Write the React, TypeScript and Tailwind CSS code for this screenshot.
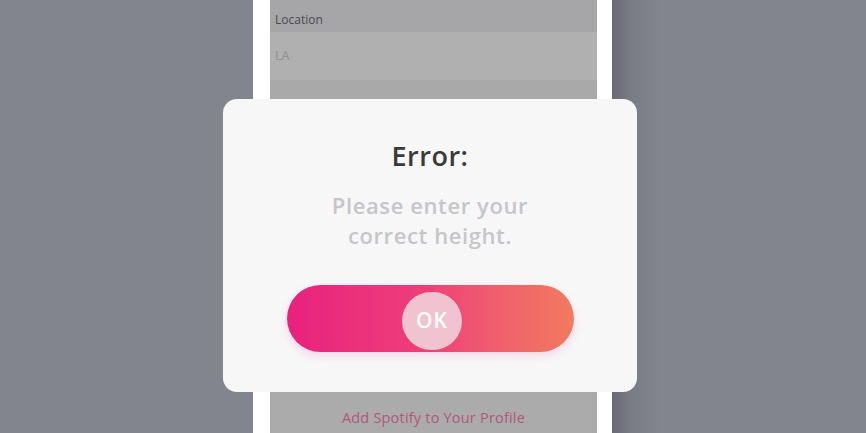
import React from "react";

const font = { fontFamily: "'Open Sans', Lato, sans-serif" };

function PhoneScreen() {
  return (
    <div className="flex h-full flex-col bg-[#aaaaab]">
      {/* profile form rows, dimmed behind the alert */}
      <div className="flex h-[32px] items-center bg-[#a6a6a8] px-[5px] pt-[8px] text-[12px] font-medium text-[#4b4b4d]">
        Location
      </div>
      <div className="flex h-[48px] items-center bg-[#b0b0b0] px-[5px] text-[12.5px] text-[#8f8f90]">
        LA
      </div>
      <div className="flex-1 bg-[#a9a9aa]" />
      <div className="flex h-[41px] items-end justify-center bg-[#ababab] pb-[4px] text-[14.5px] font-medium tracking-[0.2px] text-[#b1587a]">
        Add Spotify to Your Profile
      </div>
    </div>
  );
}

function ErrorAlert() {
  return (
    <div className="absolute left-[223px] top-[99px] flex h-[293px] w-[414px] flex-col items-center rounded-[14px] bg-[#f7f7f8] pt-[39px]">
      <h2 className="text-[27px] font-semibold leading-[36px] tracking-[0.5px] text-[#3a3a3c]">Error:</h2>
      <p className="mt-[16px] text-center text-[22px] font-semibold leading-[30px] tracking-[0.6px] text-[#c6c6ca]">
        Please enter your
        <br />
        correct height.
      </p>
      <button className="mt-[35px] flex h-[67px] w-[287px] items-center justify-center rounded-full bg-gradient-to-r from-[#e8207f] via-[#ee3f78] to-[#f17a5e] shadow-[0_4px_10px_rgba(232,40,110,0.15)]">
        <span className="relative left-[2px] top-[2px] flex h-[58px] w-[60px] items-center justify-center rounded-full bg-[#f1c2cf] text-[21px] font-semibold tracking-[1px] text-white">
          OK
        </span>
      </button>
    </div>
  );
}

export default function App() {
  return (
    <div className="relative flex h-[433px] w-[866px] overflow-hidden bg-[#82848e]" style={font}>
      <div className="w-[253px] shrink-0" />
      <div className="h-full w-[359px] shrink-0 bg-white pl-[17px] pr-[15px]">
        <PhoneScreen />
      </div>
      <div className="flex-1 bg-[linear-gradient(to_right,#6a6b73,#7a7c86_20px,#82848e_50px)]" />
      <ErrorAlert />
    </div>
  );
}
